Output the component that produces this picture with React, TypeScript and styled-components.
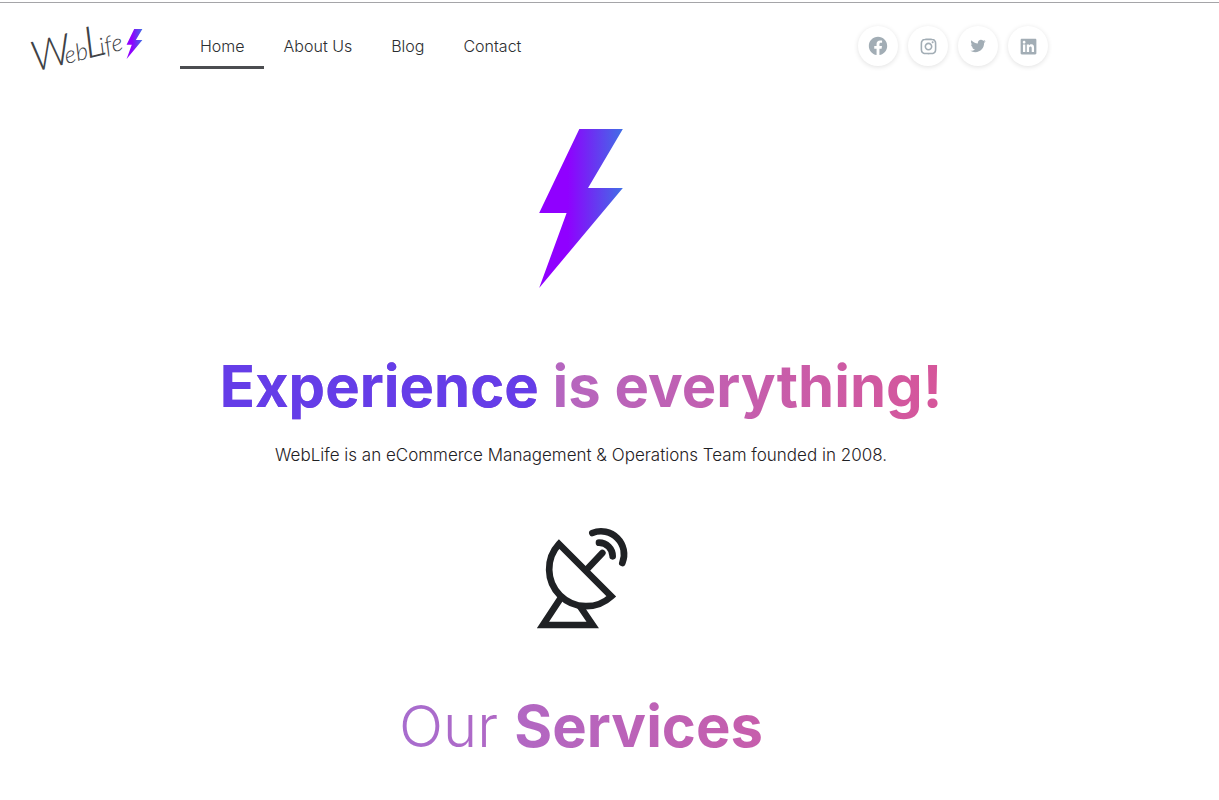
import React from "react";
import styled, { createGlobalStyle } from "styled-components";
import {
  RiFacebookCircleFill,
  RiInstagramLine,
  RiTwitterFill,
  RiLinkedinBoxFill,
} from "react-icons/ri";

const GlobalStyle = createGlobalStyle`
  *, *::before, *::after { box-sizing: border-box; }
  body {
    margin: 0;
    background: #ffffff;
    color: #1f2124;
    font-family: Inter, "Liberation Sans", sans-serif;
    font-weight: 300;
  }
`;

const Page = styled.div`
  padding-top: 2px;
  padding-right: 57px;
`;

const TopRule = styled.div`
  height: 1px;
  margin-right: -57px;
  background: #a5a5a8;
`;

const Header = styled.header`
  display: flex;
  align-items: center;
  height: 86px;
  padding: 0 114px 0 32px;
`;

const LogoLink = styled.a`
  display: block;
  width: 116px;
  height: 66px;
  margin-right: 32px;
`;

const Nav = styled.nav`
  display: flex;
`;

const NavLink = styled.a<{ $active?: boolean }>`
  padding: 8px 19px 5px 20px;
  border-bottom: 3px solid ${(p) => (p.$active ? "#4b4d50" : "transparent")};
  color: #2c2e31;
  font-size: 16px;
  line-height: 30px;
  text-decoration: none;
  white-space: nowrap;
`;

const SocialList = styled.div`
  display: flex;
  gap: 10px;
  margin-left: auto;
`;

const SocialLink = styled.a`
  display: flex;
  align-items: center;
  justify-content: center;
  width: 40px;
  height: 40px;
  border-radius: 50%;
  background: #ffffff;
  box-shadow: 0 1px 5px rgba(0, 0, 0, 0.12);
  color: #a2adb5;
`;

const Main = styled.main`
  display: flex;
  flex-direction: column;
  align-items: center;
  padding-top: 40px;
  text-align: center;
`;

const Art = styled.svg`
  display: block;
  overflow: visible;
`;

const Title = styled.h1`
  width: 100%;
  margin: 60px 0 0;
  background: linear-gradient(90deg, #857df5, #e94d85);
  background-clip: text;
  -webkit-background-clip: text;
  color: transparent;
  font-size: 58px;
  line-height: 76px;
  font-weight: 700;
`;

const SectionTitle = styled(Title).attrs({ as: "h2" })`
  margin-top: 48px;
  font-weight: 300;

  b {
    font-weight: 700;
  }
`;

const Accent = styled.span`
  color: #653de8;
`;

const Lead = styled.p`
  margin: 17px 0 46px;
  font-size: 17px;
  line-height: 28px;
`;

const Wordmark = styled.text`
  font-family: Lato, "Liberation Sans", sans-serif;
  font-style: italic;
  font-weight: 300;
  fill: #3f4347;
`;

function BoltShape({ id }: { id: string }) {
  return (
    <>
      <defs>
        <linearGradient id={id} x1="0" y1="0" x2="1" y2="0">
          <stop offset="0.34" stopColor="#9000ff" />
          <stop offset="0.6" stopColor="#6f2cf3" />
          <stop offset="1" stopColor="#416fe6" />
        </linearGradient>
      </defs>
      <path
        d="M120 0H250L146 176H250L0 475L82 251H0Z"
        fill={`url(#${id})`}
      />
    </>
  );
}

function Logo() {
  return (
    <Art width="116" height="66" viewBox="0 0 116 66" role="img" aria-label="WebLife">
      <Wordmark transform="rotate(-14 6 58)" x="3" y="58">
        <tspan fontSize="42">W</tspan>
        <tspan fontSize="24" dx="-7">eb</tspan>
        <tspan fontSize="44" dx="-2">L</tspan>
        <tspan fontSize="24" dx="-6">ife</tspan>
      </Wordmark>
      <svg x="94" y="16" width="17" height="30" viewBox="0 0 250 475">
        <BoltShape id="logo-bolt" />
      </svg>
    </Art>
  );
}

function SatelliteDish() {
  return (
    <Art
      width="120"
      height="125"
      viewBox="0 0 360 375"
      fill="none"
      stroke="#1f2124"
      strokeWidth="20"
      aria-hidden="true"
    >
      <path d="M114 87L271 244A111.1 111.1 0 0 1 114 87Z" />
      <path d="M120 248L66 330H215L177 274" />
      <g strokeLinecap="round">
        <path d="M198 163L244 114" />
        <path d="M234 83A41 41 0 0 1 275 124" />
        <path d="M214 54A69 69 0 0 1 304 144" />
      </g>
    </Art>
  );
}

const links = ["Home", "About Us", "Blog", "Contact"];

const socials = [
  { name: "Facebook", Icon: RiFacebookCircleFill, size: 22 },
  { name: "Instagram", Icon: RiInstagramLine, size: 19 },
  { name: "Twitter", Icon: RiTwitterFill, size: 18 },
  { name: "LinkedIn", Icon: RiLinkedinBoxFill, size: 21 },
];

export default function App() {
  return (
    <>
      <GlobalStyle />
      <Page>
        <TopRule />
        <Header>
          <LogoLink href="#" aria-label="WebLife home">
            <Logo />
          </LogoLink>
          <Nav>
            {links.map((label, i) => (
              <NavLink key={label} href="#" $active={i === 0}>
                {label}
              </NavLink>
            ))}
          </Nav>
          <SocialList>
            {socials.map(({ name, Icon, size }) => (
              <SocialLink key={name} href="#" aria-label={name}>
                <Icon size={size} />
              </SocialLink>
            ))}
          </SocialList>
        </Header>
        <Main>
          <Art width="84" height="159" viewBox="0 0 250 475" aria-hidden="true">
            <BoltShape id="hero-bolt" />
          </Art>
          <Title>
            <Accent>Experience</Accent> is everything!
          </Title>
          <Lead>WebLife is an eCommerce Management &amp; Operations Team founded in 2008.</Lead>
          <SatelliteDish />
          <SectionTitle>
            Our <b>Services</b>
          </SectionTitle>
        </Main>
      </Page>
    </>
  );
}
